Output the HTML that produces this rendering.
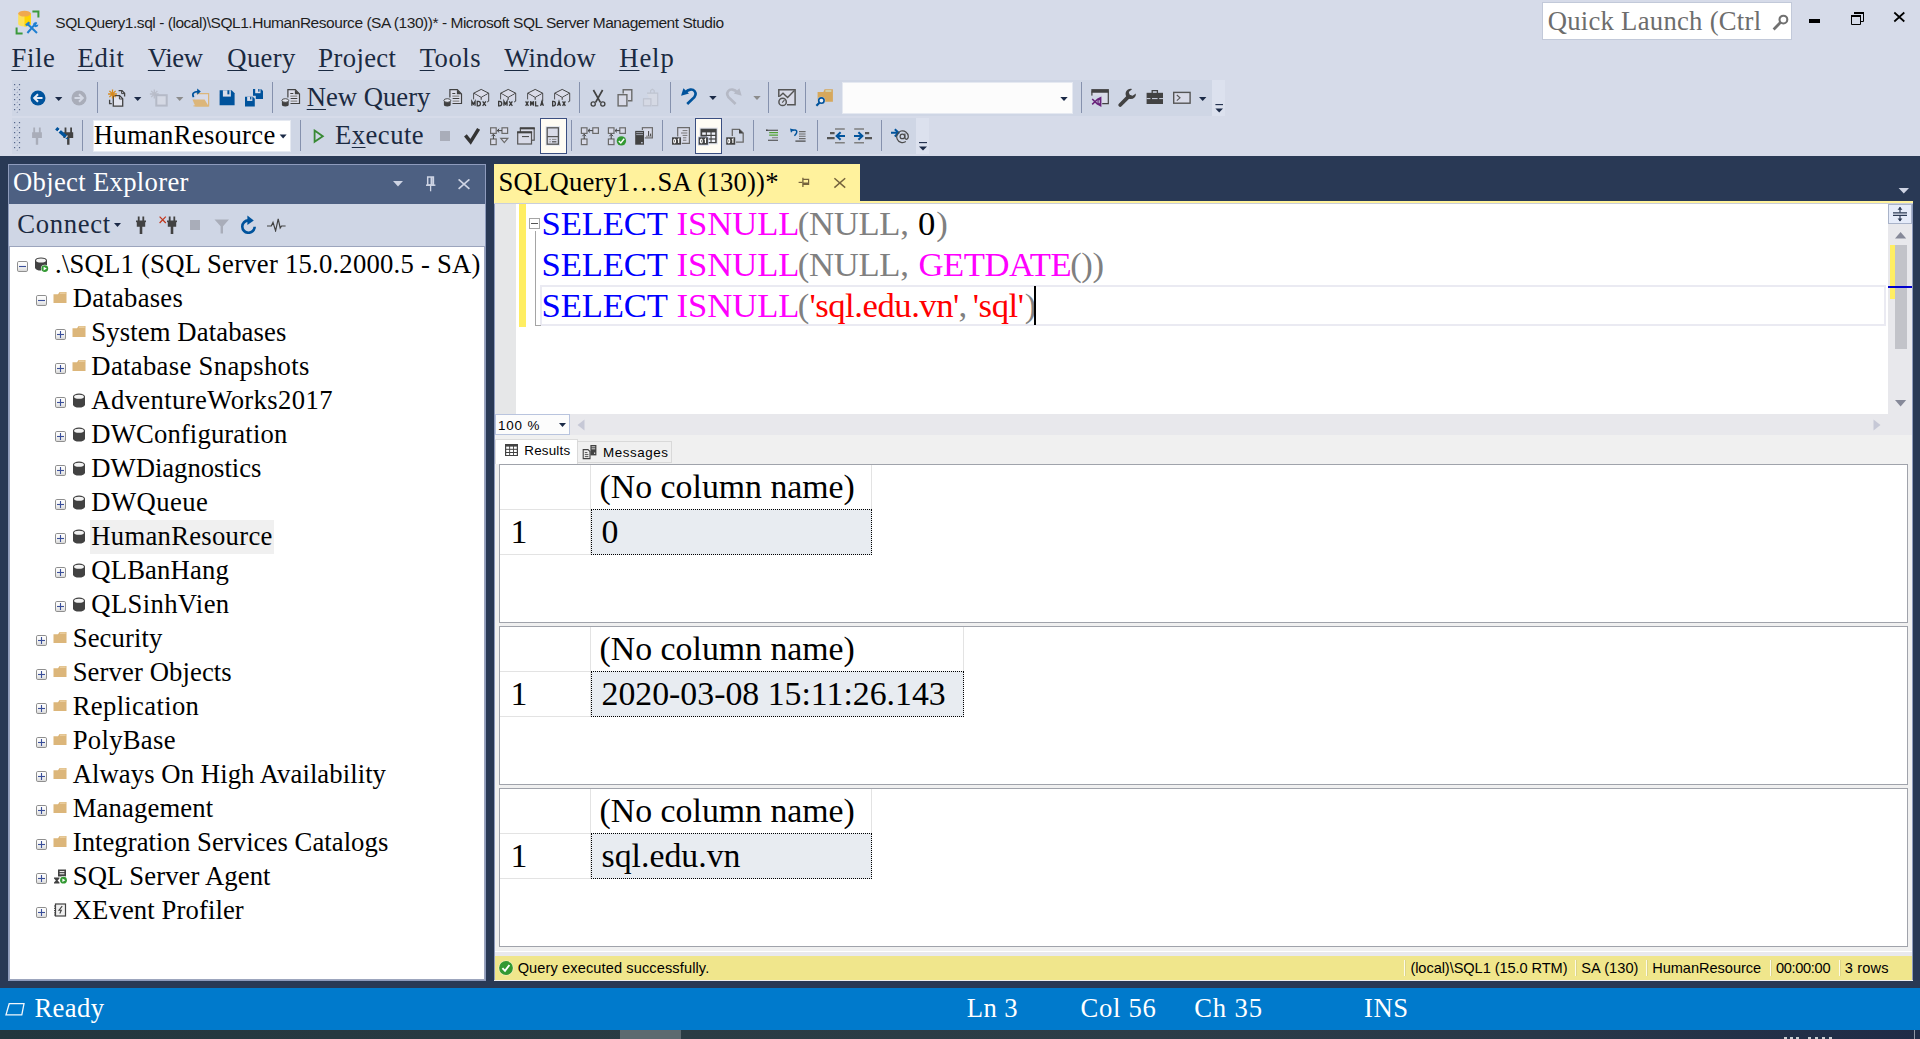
<!DOCTYPE html>
<html>
<head>
<meta charset="utf-8">
<title>SQLQuery1.sql - Microsoft SQL Server Management Studio</title>
<style>
*{box-sizing:border-box;margin:0;padding:0}
html,body{width:1920px;height:1039px;overflow:hidden}
body{background:#d6dbe9;font-family:"Liberation Serif",serif;color:#000;position:relative}
.a{position:absolute;display:block}
.sans{font-family:"Liberation Sans",sans-serif}
.t{position:absolute;white-space:nowrap;line-height:1}
u{text-decoration:underline;text-decoration-thickness:1px;text-underline-offset:3px;text-decoration-skip-ink:none}
.kw{color:#0000ff}.fn{color:#ff00ff}.gr{color:#808080}.st{color:#ff0000}
</style>
</head>
<body>
<svg class="a" style="left:15px;top:9px" width="26" height="26" viewBox="0 0 26 26"><path d="M3.2 4.6V15A6.3 2.6 0 0 0 15.8 15V4.6Z" fill="#fde05a"/><path d="M9.5 4.6V17.6A6.3 2.6 0 0 0 15.8 15V4.6Z" fill="#ffd400"/><ellipse cx="9.5" cy="4.6" rx="6.3" ry="2.9" fill="#f0a94e"/><path d="M17.4 2.6H23.4V8.6" fill="none" stroke="#3c9a3c" stroke-width="2"/><path d="M1.6 18.4V24.4H7.6" fill="none" stroke="#3c9a3c" stroke-width="2"/><path d="M12 14.6L22 24M21.6 13.4L12.4 24" fill="none" stroke="#1f7fd1" stroke-width="2"/><path d="M10.2 15.6L13.6 12.4L15.2 14L11.8 17.2Z" fill="#1f7fd1"/><path d="M19.6 13.2A2.6 2.6 0 1 0 23.4 15.4L21.6 16L20.4 14.8Z" fill="#1f7fd1"/></svg>
<div class="t sans" style="left:55.3px;top:15.18px;font-size:15.5px;color:#1e1e1e;letter-spacing:-0.458px;">SQLQuery1.sql - (local)\SQL1.HumanResource (SA (130))* - Microsoft SQL Server Management Studio</div>
<div class="a" style="left:1542px;top:2px;width:250px;height:38px;background:#ffffff;border:1px solid #c2c9d9;"></div>
<div class="t" style="left:1547.63px;top:7.96px;font-size:26.67px;color:#6d6d6d;letter-spacing:0.279px;">Quick Launch (Ctrl</div>
<svg class="a" style="left:1772px;top:14px" width="17" height="17" viewBox="0 0 17 17"><circle cx="11.4" cy="5.6" r="3.9" fill="none" stroke="#717171" stroke-width="2.1"/><path d="M8.4 8.6L1.6 15.4" stroke="#717171" stroke-width="2.8"/></svg>
<div class="a" style="left:1809px;top:19px;width:11px;height:4px;background:#000;"></div>
<svg class="a" style="left:1851px;top:12px" width="13" height="13" viewBox="0 0 13 13"><path d="M3.5 0.5H12.5V9.5H9.5M0.5 3.5H9.5V12.5H0.5Z" fill="none" stroke="#000" stroke-width="1"/><path d="M3 1H13M0 4H10" stroke="#000" stroke-width="2"/></svg>
<svg class="a" style="left:1893px;top:11px" width="13" height="12" viewBox="0 0 13 12"><path d="M1.3 1.5L11.3 10.5M11.3 1.5L1.3 10.5" stroke="#000" stroke-width="1.7" fill="none"/></svg>
<div class="t" style="left:11.4px;top:44.96px;font-size:26.67px;color:#1b2a41;letter-spacing:0.687px;"><u>F</u>ile</div>
<div class="t" style="left:77.6px;top:44.96px;font-size:26.67px;color:#1b2a41;letter-spacing:0.643px;"><u>E</u>dit</div>
<div class="t" style="left:147.83px;top:44.96px;font-size:26.67px;color:#1b2a41;letter-spacing:-0.325px;"><u>V</u>iew</div>
<div class="t" style="left:227.33px;top:44.96px;font-size:26.67px;color:#1b2a41;letter-spacing:0.331px;"><u>Q</u>uery</div>
<div class="t" style="left:318.3px;top:44.96px;font-size:26.67px;color:#1b2a41;letter-spacing:0.36px;"><u>P</u>roject</div>
<div class="t" style="left:419.67px;top:44.96px;font-size:26.67px;color:#1b2a41;letter-spacing:0.532px;"><u>T</u>ools</div>
<div class="t" style="left:504.3px;top:44.96px;font-size:26.67px;color:#1b2a41;letter-spacing:0.124px;"><u>W</u>indow</div>
<div class="t" style="left:619.3px;top:44.96px;font-size:26.67px;color:#1b2a41;letter-spacing:0.865px;"><u>H</u>elp</div>
<div class="a" style="left:12px;top:80px;width:1200px;height:36px;background:#cfd6e5;"></div>
<div class="a" style="left:12px;top:118px;width:904px;height:36px;background:#cfd6e5;"></div>
<svg class="a" style="left:14px;top:84px" width="7" height="30" viewBox="0 0 7 30"><rect x="0" y="0" width="1.2" height="1.2" fill="#56668a"/><rect x="4.9" y="0" width="1.2" height="1.2" fill="#56668a"/><rect x="2.1" y="2.1" width="1.2" height="1.2" fill="#e3e7f1"/><rect x="2.6" y="2.6" width="1.2" height="1.2" fill="#939fba"/><rect x="0" y="5" width="1.2" height="1.2" fill="#56668a"/><rect x="4.9" y="5" width="1.2" height="1.2" fill="#56668a"/><rect x="2.1" y="7.1" width="1.2" height="1.2" fill="#e3e7f1"/><rect x="2.6" y="7.6" width="1.2" height="1.2" fill="#939fba"/><rect x="0" y="10" width="1.2" height="1.2" fill="#56668a"/><rect x="4.9" y="10" width="1.2" height="1.2" fill="#56668a"/><rect x="2.1" y="12.1" width="1.2" height="1.2" fill="#e3e7f1"/><rect x="2.6" y="12.6" width="1.2" height="1.2" fill="#939fba"/><rect x="0" y="15" width="1.2" height="1.2" fill="#56668a"/><rect x="4.9" y="15" width="1.2" height="1.2" fill="#56668a"/><rect x="2.1" y="17.1" width="1.2" height="1.2" fill="#e3e7f1"/><rect x="2.6" y="17.6" width="1.2" height="1.2" fill="#939fba"/><rect x="0" y="20" width="1.2" height="1.2" fill="#56668a"/><rect x="4.9" y="20" width="1.2" height="1.2" fill="#56668a"/><rect x="2.1" y="22.1" width="1.2" height="1.2" fill="#e3e7f1"/><rect x="2.6" y="22.6" width="1.2" height="1.2" fill="#939fba"/><rect x="0" y="25" width="1.2" height="1.2" fill="#56668a"/><rect x="4.9" y="25" width="1.2" height="1.2" fill="#56668a"/><rect x="2.1" y="27.1" width="1.2" height="1.2" fill="#e3e7f1"/><rect x="2.6" y="27.6" width="1.2" height="1.2" fill="#939fba"/></svg>
<svg class="a" style="left:14px;top:122px" width="7" height="30" viewBox="0 0 7 30"><rect x="0" y="0" width="1.2" height="1.2" fill="#56668a"/><rect x="4.9" y="0" width="1.2" height="1.2" fill="#56668a"/><rect x="2.1" y="2.1" width="1.2" height="1.2" fill="#e3e7f1"/><rect x="2.6" y="2.6" width="1.2" height="1.2" fill="#939fba"/><rect x="0" y="5" width="1.2" height="1.2" fill="#56668a"/><rect x="4.9" y="5" width="1.2" height="1.2" fill="#56668a"/><rect x="2.1" y="7.1" width="1.2" height="1.2" fill="#e3e7f1"/><rect x="2.6" y="7.6" width="1.2" height="1.2" fill="#939fba"/><rect x="0" y="10" width="1.2" height="1.2" fill="#56668a"/><rect x="4.9" y="10" width="1.2" height="1.2" fill="#56668a"/><rect x="2.1" y="12.1" width="1.2" height="1.2" fill="#e3e7f1"/><rect x="2.6" y="12.6" width="1.2" height="1.2" fill="#939fba"/><rect x="0" y="15" width="1.2" height="1.2" fill="#56668a"/><rect x="4.9" y="15" width="1.2" height="1.2" fill="#56668a"/><rect x="2.1" y="17.1" width="1.2" height="1.2" fill="#e3e7f1"/><rect x="2.6" y="17.6" width="1.2" height="1.2" fill="#939fba"/><rect x="0" y="20" width="1.2" height="1.2" fill="#56668a"/><rect x="4.9" y="20" width="1.2" height="1.2" fill="#56668a"/><rect x="2.1" y="22.1" width="1.2" height="1.2" fill="#e3e7f1"/><rect x="2.6" y="22.6" width="1.2" height="1.2" fill="#939fba"/><rect x="0" y="25" width="1.2" height="1.2" fill="#56668a"/><rect x="4.9" y="25" width="1.2" height="1.2" fill="#56668a"/><rect x="2.1" y="27.1" width="1.2" height="1.2" fill="#e3e7f1"/><rect x="2.6" y="27.6" width="1.2" height="1.2" fill="#939fba"/></svg>
<div class="t" style="left:306.7px;top:83.96px;font-size:26.67px;color:#1b2a41;letter-spacing:0.015px;"><u>N</u>ew Query</div>
<div class="t" style="left:335.0px;top:121.96px;font-size:26.67px;color:#1b2a41;letter-spacing:0.459px;">E<u>x</u>ecute</div>
<div class="a" style="left:842px;top:82px;width:231px;height:32px;background:#fcfcfc;border:1px solid #e5e9f1;"></div>
<div class="a" style="left:93px;top:120px;width:198px;height:32px;background:#ffffff;border:1px solid #e5e9f1;"></div>
<div class="t" style="left:93.7px;top:121.96px;font-size:26.67px;color:#000;letter-spacing:0.323px;">HumanResource</div>
<div class="a" style="left:97px;top:82px;width:1px;height:31px;background:#8591ad;"></div>
<div class="a" style="left:272px;top:82px;width:1px;height:31px;background:#8591ad;"></div>
<div class="a" style="left:579px;top:82px;width:1px;height:31px;background:#8591ad;"></div>
<div class="a" style="left:670px;top:82px;width:1px;height:31px;background:#8591ad;"></div>
<div class="a" style="left:768px;top:82px;width:1px;height:31px;background:#8591ad;"></div>
<div class="a" style="left:805px;top:82px;width:1px;height:31px;background:#8591ad;"></div>
<div class="a" style="left:1081px;top:82px;width:1px;height:31px;background:#8591ad;"></div>
<div class="a" style="left:82px;top:120px;width:1px;height:31px;background:#8591ad;"></div>
<div class="a" style="left:300px;top:120px;width:1px;height:31px;background:#8591ad;"></div>
<div class="a" style="left:571px;top:120px;width:1px;height:31px;background:#8591ad;"></div>
<div class="a" style="left:662px;top:120px;width:1px;height:31px;background:#8591ad;"></div>
<div class="a" style="left:753px;top:120px;width:1px;height:31px;background:#8591ad;"></div>
<div class="a" style="left:817px;top:120px;width:1px;height:31px;background:#8591ad;"></div>
<div class="a" style="left:881px;top:120px;width:1px;height:31px;background:#8591ad;"></div>
<svg class="a" style="left:0px;top:80px;opacity:0.999" width="1300" height="76" viewBox="0 80 1300 76"><circle cx="38" cy="98" r="7.5" fill="#00539c"/><path d="M42.5 98H34.6M38 94.3L34.2 98L38 101.7" fill="none" stroke="#e8ecf5" stroke-width="2"/><path d="M55 97H62.4L58.7 101Z" fill="#1b2a47"/><circle cx="79" cy="98" r="7.5" fill="#a9adb9"/><path d="M74.5 98H82.4M79 94.3L82.8 98L79 101.7" fill="none" stroke="#d3d8e4" stroke-width="2"/><path d="M118.6 90.6H122L124.6 93.2V96.6" fill="none" stroke="#424242" stroke-width="1.3"/><path d="M121.6 90.6V93.6H124.6" fill="none" stroke="#424242" stroke-width="1"/><path d="M113.3 95.6H119.6L122.7 98.7V106.2H113.3Z" fill="#e2e4ee" stroke="#424242" stroke-width="1.3"/><path d="M119.4 95.6V99H122.7" fill="none" stroke="#424242" stroke-width="1"/><path d="M109.6 99.8V103.6H111.8" fill="none" stroke="#424242" stroke-width="1.3"/><path d="M112.5 89.6V98.4M108.1 94H116.9M109.4 90.9L115.6 97.1M115.6 90.9L109.4 97.1" stroke="#d68a1e" stroke-width="1.3" fill="none"/><path d="M134 97H141.4L137.7 101Z" fill="#1b2a47"/><path d="M154.3 89.6V98.4M149.9 94H158.70000000000002M151.20000000000002 90.9L157.4 97.1M157.4 90.9L151.20000000000002 97.1" stroke="#b9bdc9" stroke-width="1.3" fill="none"/><rect x="156.3" y="95.2" width="10.4" height="10.4" fill="#d5d9e4" stroke="#b5bac7" stroke-width="2"/><path d="M176 97H183.4L179.7 101Z" fill="#8c8c8c"/><path d="M196.5 93.6H208.6V105.8H193.5" fill="#d8dbe8" stroke="#dcb67a" stroke-width="1.2"/><path d="M192.4 99.4H204.6L208.8 106.4H195.4Z" fill="#dcb67a"/><path d="M193.6 97.2C191.6 93.6 193.6 91.4 198.6 91.6" fill="none" stroke="#00539c" stroke-width="1.7"/><path d="M197.2 88.6L200.8 91.6L197.2 94.8Z" fill="#00539c"/><path d="M219.6 90.3H231.6L234.6 93.3V105.3H219.6Z" fill="#00539c"/><rect x="222.9" y="90.3" width="7.95" height="6.3" fill="#d9dde9"/><rect x="227.4" y="90.3" width="1.9500000000000002" height="4.050000000000001" fill="#00539c"/><path d="M253 89H261.0L263 91.0V99H253Z" fill="#00539c"/><rect x="255.2" y="89" width="5.300000000000001" height="4.2" fill="#d9dde9"/><rect x="258.2" y="89" width="1.3" height="2.7" fill="#00539c"/><rect x="244" y="95.8" width="11.8" height="12" fill="#cfd6e5"/><path d="M245 96.8H252.84L254.8 98.75999999999999V106.6H245Z" fill="#00539c"/><rect x="247.156" y="96.8" width="5.194000000000001" height="4.1160000000000005" fill="#d9dde9"/><rect x="250.096" y="96.8" width="1.2740000000000002" height="2.6460000000000004" fill="#00539c"/><path d="M287.90000000000003 89.69999999999999H295.3L299.5 93.89999999999999V103.5H287.90000000000003Z" fill="#dcdeeb" stroke="#424242" stroke-width="1.2"/><path d="M294.90000000000003 89.5L299.7 94.3H294.90000000000003Z" fill="#424242"/><path d="M290.3 93.5H293.3M290.3 98.5H297.3" stroke="#424242" stroke-width="1.1"/><path d="M290.3 96.1H297.3M290.3 101.1H297.3" stroke="#8c8c8c" stroke-width="1.1"/><rect x="280.7" y="97.5" width="9.8" height="9.6" fill="#cfd6e5"/><path d="M281.90000000000003 100.5V104.69999999999999A3.4 1.7 0 0 0 288.7 104.69999999999999V100.5Z" fill="#424242"/><ellipse cx="285.3" cy="100.5" rx="3.4" ry="1.8" fill="#e4e6ef" stroke="#424242" stroke-width="0.9"/><path d="M449.90000000000003 89.69999999999999H457.3L461.5 93.89999999999999V103.5H449.90000000000003Z" fill="#dcdeeb" stroke="#424242" stroke-width="1.2"/><path d="M456.90000000000003 89.5L461.7 94.3H456.90000000000003Z" fill="#424242"/><path d="M452.3 93.5H455.3M452.3 98.5H459.3" stroke="#424242" stroke-width="1.1"/><path d="M452.3 96.1H459.3M452.3 101.1H459.3" stroke="#8c8c8c" stroke-width="1.1"/><rect x="442.7" y="97.5" width="9.8" height="9.6" fill="#cfd6e5"/><path d="M443.90000000000003 100.5V104.69999999999999A3.4 1.7 0 0 0 450.7 104.69999999999999V100.5Z" fill="#424242"/><ellipse cx="447.3" cy="100.5" rx="3.4" ry="1.8" fill="#e4e6ef" stroke="#424242" stroke-width="0.9"/><path d="M481.2 89.4L488.7 93.2L481.2 97.4L473.7 93.2Z" fill="#dadbe8" stroke="#424242" stroke-width="1"/><path d="M473.7 93.2V99.4M481.2 97.4V99.6M488.7 93.2V101.2L487.09999999999997 102" fill="none" stroke="#424242" stroke-width="1"/><path d="M474.3 94L481.2 98L488.09999999999997 94V99.5H474.3Z" fill="#dadbe8" opacity="0.8"/><path d="M481.2 97.4V99.6" stroke="#424242" stroke-width="1"/><path d="M471.84999999999997 105.85000000000001V101.35000000000001L473.45 104.14L475.04999999999995 101.35000000000001V105.85000000000001" fill="none" stroke="#3a3a3a" stroke-width="1.3" stroke-linejoin="miter"/><path d="M477.24999999999994 101.35000000000001V105.85000000000001H478.36999999999995Q480.44999999999993 105.85000000000001 480.44999999999993 103.60000000000001Q480.44999999999993 101.35000000000001 478.36999999999995 101.35000000000001Z" fill="none" stroke="#3a3a3a" stroke-width="1.3" stroke-linejoin="miter"/><path d="M482.65 101.35000000000001L485.84999999999997 105.85000000000001M485.84999999999997 101.35000000000001L482.65 105.85000000000001" fill="none" stroke="#3a3a3a" stroke-width="1.3" stroke-linejoin="miter"/><path d="M508.2 89.4L515.7 93.2L508.2 97.4L500.7 93.2Z" fill="#dadbe8" stroke="#424242" stroke-width="1"/><path d="M500.7 93.2V99.4M508.2 97.4V99.6M515.7 93.2V101.2L514.1 102" fill="none" stroke="#424242" stroke-width="1"/><path d="M501.3 94L508.2 98L515.1 94V99.5H501.3Z" fill="#dadbe8" opacity="0.8"/><path d="M508.2 97.4V99.6" stroke="#424242" stroke-width="1"/><path d="M498.65 101.35000000000001V105.85000000000001H499.73499999999996Q501.75 105.85000000000001 501.75 103.60000000000001Q501.75 101.35000000000001 499.73499999999996 101.35000000000001Z" fill="none" stroke="#3a3a3a" stroke-width="1.3" stroke-linejoin="miter"/><path d="M503.95 105.85000000000001V101.35000000000001L505.5 104.14L507.05 101.35000000000001V105.85000000000001" fill="none" stroke="#3a3a3a" stroke-width="1.3" stroke-linejoin="miter"/><path d="M509.25 101.35000000000001L512.35 105.85000000000001M512.35 101.35000000000001L509.25 105.85000000000001" fill="none" stroke="#3a3a3a" stroke-width="1.3" stroke-linejoin="miter"/><path d="M535.2 89.4L542.7 93.2L535.2 97.4L527.7 93.2Z" fill="#dadbe8" stroke="#424242" stroke-width="1"/><path d="M527.7 93.2V99.4M535.2 97.4V99.6M542.7 93.2V101.2L541.1 102" fill="none" stroke="#424242" stroke-width="1"/><path d="M528.3000000000001 94L535.2 98L542.1 94V99.5H528.3000000000001Z" fill="#dadbe8" opacity="0.8"/><path d="M535.2 97.4V99.6" stroke="#424242" stroke-width="1"/><path d="M525.65 101.35000000000001L528.425 105.85000000000001M528.425 101.35000000000001L525.65 105.85000000000001" fill="none" stroke="#3a3a3a" stroke-width="1.3" stroke-linejoin="miter"/><path d="M530.625 105.85000000000001V101.35000000000001L532.0125 104.14L533.4 101.35000000000001V105.85000000000001" fill="none" stroke="#3a3a3a" stroke-width="1.3" stroke-linejoin="miter"/><path d="M535.6 101.35000000000001V105.85000000000001H538.375" fill="none" stroke="#3a3a3a" stroke-width="1.3" stroke-linejoin="miter"/><path d="M540.5749999999999 105.85000000000001L541.9625 101.35000000000001L543.3499999999999 105.85000000000001M541.1854999999999 104.32000000000001H542.7394999999999" fill="none" stroke="#3a3a3a" stroke-width="1.3" stroke-linejoin="miter"/><path d="M562.2 89.4L569.7 93.2L562.2 97.4L554.7 93.2Z" fill="#dadbe8" stroke="#424242" stroke-width="1"/><path d="M554.7 93.2V99.4M562.2 97.4V99.6M569.7 93.2V101.2L568.1 102" fill="none" stroke="#424242" stroke-width="1"/><path d="M555.3000000000001 94L562.2 98L569.1 94V99.5H555.3000000000001Z" fill="#dadbe8" opacity="0.8"/><path d="M562.2 97.4V99.6" stroke="#424242" stroke-width="1"/><path d="M552.65 101.35000000000001V105.85000000000001H553.6183333333333Q555.4166666666666 105.85000000000001 555.4166666666666 103.60000000000001Q555.4166666666666 101.35000000000001 553.6183333333333 101.35000000000001Z" fill="none" stroke="#3a3a3a" stroke-width="1.3" stroke-linejoin="miter"/><path d="M557.6166666666667 105.85000000000001L559.0 101.35000000000001L560.3833333333333 105.85000000000001M558.2253333333333 104.32000000000001H559.7746666666667" fill="none" stroke="#3a3a3a" stroke-width="1.3" stroke-linejoin="miter"/><path d="M562.5833333333333 101.35000000000001L565.3499999999999 105.85000000000001M565.3499999999999 101.35000000000001L562.5833333333333 105.85000000000001" fill="none" stroke="#3a3a3a" stroke-width="1.3" stroke-linejoin="miter"/><path d="M593.4 90L600.4 102.4M602.6 90L595.6 102.4" stroke="#424242" stroke-width="1.7" fill="none"/><circle cx="593.2" cy="104" r="2.1" fill="none" stroke="#424242" stroke-width="1.3"/><circle cx="602.8" cy="104" r="2.1" fill="none" stroke="#424242" stroke-width="1.3"/><path d="M623.2 93.6V89.8H631.8V100.7H628" fill="#d9dbe8" stroke="#6b6b6b" stroke-width="1.4"/><rect x="618.1" y="94.7" width="8.8" height="11.2" fill="#d9dbe8" stroke="#6b6b6b" stroke-width="1.4"/><path d="M647 93.2H657.7V105.7H652" fill="#d5d9e4" stroke="#bfc4d0" stroke-width="1.2"/><path d="M650.6 93V90.6L652.4 89.2L654.2 90.6V93" fill="none" stroke="#bfc4d0" stroke-width="1.1"/><rect x="643.5" y="98.8" width="7.4" height="7" fill="#d5d9e4" stroke="#bfc4d0" stroke-width="1.2"/><path d="M685.6 92.4C688 89.2 692.6 88.6 694.7 91.2C696.6 93.8 695 96.8 692.4 99L687.2 104" fill="none" stroke="#00539c" stroke-width="2.6"/><path d="M683.4 88.3L681.1 95.8L689 93.6Z" fill="#00539c"/><path d="M709.2 96H716.6L712.9000000000001 100Z" fill="#1b2a47"/><path d="M737.2 92.4C734.8 89.2 730.2 88.6 728.1 91.2C726.2 93.8 727.8 96.8 730.4 99L735.6 104" fill="none" stroke="#b5b9c5" stroke-width="2.6"/><path d="M739.4 88.3L741.7 95.8L733.8 93.6Z" fill="#b5b9c5"/><path d="M753.3 96H760.6999999999999L757.0 100Z" fill="#8c8c8c"/><path d="M787 104.8H795.1V89.8H778.8V97" fill="#d9dbe8" stroke="#555" stroke-width="1.5"/><path d="M779.4 96.4L783 93.2L787.6 97.6L794.4 90.4" fill="none" stroke="#555" stroke-width="1.4"/><circle cx="782.6" cy="101.9" r="3.7" fill="#d5d9e6" stroke="#555" stroke-width="1.5"/><path d="M782.2 102.6L784.4 100.2" stroke="#555" stroke-width="1.1"/><path d="M817.6 92H823.4L824.6 89.2H832.9V101.8H817.6Z" fill="#d6a85c"/><rect x="825.4" y="90.4" width="6" height="1.2" fill="#cfe6d8"/><circle cx="821.4" cy="100.6" r="3.9" fill="#cfd6e5"/><circle cx="821.4" cy="100.6" r="2.7" fill="#e9ecf4" stroke="#00539c" stroke-width="1.6"/><path d="M819.4 102.8L816.4 105.8" stroke="#00539c" stroke-width="2.2"/><path d="M1102 103.6H1108.3V92H1091.9V96" fill="#d9dbe8" stroke="#424242" stroke-width="1.2"/><rect x="1091.3" y="89.1" width="17.6" height="3.4" fill="#424242"/><rect x="1090.6" y="95.6" width="11.6" height="12" fill="#cfd6e5"/><path d="M1092.2 99L1097.8 104.4M1092.2 104.4L1097.8 99" fill="none" stroke="#68217a" stroke-width="1.5"/><path d="M1097.4 98.6L1101.4 96.4V107L1097.4 104.8Z" fill="#68217a"/><path d="M1099.2 100.2V103.2" stroke="#cfd6e5" stroke-width="1"/><path d="M1120.2 105L1128.8 96.4" stroke="#424242" stroke-width="3.8" stroke-linecap="round"/><path d="M1132.2 88.9A5.2 5.2 0 1 0 1135.9 93.4L1132.6 95.8L1129.6 94.8L1128.8 92Z" fill="#424242"/><path d="M1152.2 93.2V90.6H1157.4V93.2" fill="none" stroke="#424242" stroke-width="1.3"/><rect x="1146.6" y="92.8" width="16.4" height="11.2" fill="#424242"/><path d="M1146.6 98.6H1163" stroke="#cfd6e5" stroke-width="1"/><rect x="1150.4" y="97.4" width="1.6" height="2.6" fill="#424242"/><rect x="1157.6" y="97.4" width="1.6" height="2.6" fill="#424242"/><rect x="1173.7" y="92.4" width="16.4" height="10.8" fill="#d9dbe8" stroke="#555" stroke-width="1.4"/><path d="M1176.8 95L1180 97.8L1176.8 100.6" fill="none" stroke="#555" stroke-width="1.1"/><path d="M1199 97H1206.4L1202.7 101Z" fill="#1b2a47"/><path d="M1060.3 97H1067.7L1064.0 101Z" fill="#1b2a47"/><rect x="1212" y="80" width="13" height="36" fill="#dce1ee"/><path d="M1215.4 104.6H1223" stroke="#1b2a47" stroke-width="1.1"/><path d="M1215.4 108.4H1223.0L1219.2 112.4Z" fill="#1b2a47"/><path d="M33.300000000000004 127.4H35.1V132.20000000000002H38.9V127.4H40.7V132.20000000000002H41.900000000000006V138.0H38.2V144.8H35.800000000000004V138.0H32.1 V132.20000000000002H33.300000000000004Z" fill="#a9adb9"/><path d="M64.6 127.4H66.4V132.20000000000002H70.2V127.4H72.0V132.20000000000002H73.2V138.0H69.5V144.8H67.1V138.0H63.4 V132.20000000000002H64.6Z" fill="#424242"/><path d="M56.2 128.2L58.6 130.2" stroke="#00539c" stroke-width="3.4"/><path d="M59.6 131.2L66 136.8" stroke="#00539c" stroke-width="3.4"/><path d="M66.6 137.4L68 138.8L65.6 138.4Z" fill="#00539c" stroke="#00539c" stroke-width="0.8"/><path d="M58.6 130.2L59.6 131.2M66 136.8L66.8 137.4" stroke="#dfe4f0" stroke-width="3.6"/><path d="M279.6 134.6H286.6L283.1 138.4Z" fill="#1b2a47"/><path d="M314.6 130.6L322.8 136.2L314.6 141.8Z" fill="none" stroke="#388a34" stroke-width="1.8" stroke-linejoin="miter"/><rect x="440" y="131" width="10" height="10" fill="#a9adb9"/><path d="M465.4 135.4L470.6 141.8L478.6 128.8" fill="none" stroke="#333" stroke-width="3.5"/><rect x="490.6" y="127.8" width="5.6" height="5.6" fill="#d9dbe8" stroke="#6b6b6b" stroke-width="1.2"/><rect x="502" y="127.8" width="5.6" height="5.6" fill="#d9dbe8" stroke="#6b6b6b" stroke-width="1.2"/><rect x="490.6" y="139" width="5.6" height="5.6" fill="#d9dbe8" stroke="#6b6b6b" stroke-width="1.2"/><path d="M502 130.6H497.4M499.2 128.8L497.2 130.6L499.2 132.4" fill="none" stroke="#424242" stroke-width="1"/><path d="M493.4 139V134.6M491.6 136.2L493.4 134.2L495.2 136.2" fill="none" stroke="#424242" stroke-width="1"/><path d="M500.8 138.4H507.8L504.3 142.6Z" fill="#d9dbe8" stroke="#6b6b6b" stroke-width="1.2"/><rect x="581.4" y="127.8" width="5.6" height="5.6" fill="#d9dbe8" stroke="#6b6b6b" stroke-width="1.2"/><rect x="592.8" y="127.8" width="5.6" height="5.6" fill="#d9dbe8" stroke="#6b6b6b" stroke-width="1.2"/><rect x="581.4" y="139" width="5.6" height="5.6" fill="#d9dbe8" stroke="#6b6b6b" stroke-width="1.2"/><path d="M592.8 130.6H588.1999999999999M590.0 128.8L588.0 130.6L590.0 132.4" fill="none" stroke="#424242" stroke-width="1"/><path d="M584.1999999999999 139V134.6M582.4 136.2L584.1999999999999 134.2L586.0 136.2" fill="none" stroke="#424242" stroke-width="1"/><rect x="608.4" y="127.8" width="5.6" height="5.6" fill="#d9dbe8" stroke="#6b6b6b" stroke-width="1.2"/><rect x="619.8" y="127.8" width="5.6" height="5.6" fill="#d9dbe8" stroke="#6b6b6b" stroke-width="1.2"/><rect x="608.4" y="139" width="5.6" height="5.6" fill="#d9dbe8" stroke="#6b6b6b" stroke-width="1.2"/><path d="M619.8 130.6H615.1999999999999M617.0 128.8L615.0 130.6L617.0 132.4" fill="none" stroke="#424242" stroke-width="1"/><path d="M611.1999999999999 139V134.6M609.4 136.2L611.1999999999999 134.2L613.0 136.2" fill="none" stroke="#424242" stroke-width="1"/><circle cx="621.4" cy="140.9" r="5.3" fill="#cfd6e5"/><circle cx="621.4" cy="140.9" r="4.7" fill="#329932"/><path d="M618.8 141L620.8 143L624.2 138.8" fill="none" stroke="#fff" stroke-width="1.4"/><rect x="520.4" y="128.6" width="13.8" height="11.6" fill="#d9dbe8" stroke="#555" stroke-width="1.2"/><path d="M519.8 128.2H534.8" stroke="#424242" stroke-width="2"/><rect x="517.7" y="132.6" width="13.8" height="11.4" fill="#d9dbe8" stroke="#555" stroke-width="1.2"/><path d="M517.1 132.2H532.1" stroke="#424242" stroke-width="2"/><path d="M522 136.6H529" stroke="#424242" stroke-width="1"/><rect x="540.5" y="118.5" width="26" height="35" fill="#fffcf4" stroke="#3b4f81" stroke-width="1"/><rect x="545.6" y="126.2" width="14.4" height="19.4" fill="#c7d0e8" opacity="0.6"/><rect x="547.2" y="127.8" width="11.2" height="16.4" fill="#d9dbe8" stroke="#555" stroke-width="1.3"/><path d="M547.2 136.6H558.4" stroke="#555" stroke-width="1.2"/><path d="M549.4 139.4H550.8M552 139.4H556.4M549.4 141.8H550.8" stroke="#8c8c8c" stroke-width="1"/><path d="M552 141.8H556.4" stroke="#424242" stroke-width="1.1"/><rect x="642.4" y="127.7" width="10" height="10.2" fill="#d9dbe8" stroke="#6b6b6b" stroke-width="1.2"/><path d="M648.6 136V131M650.6 136V133.6" stroke="#424242" stroke-width="1"/><path d="M646 136.2H651.6" stroke="#6b6b6b" stroke-width="0.8"/><rect x="634.4" y="130" width="10.4" height="15.4" fill="#cfd6e5"/><rect x="635.2" y="130.9" width="8.8" height="13.8" fill="#424242"/><path d="M636.2 132.6H643M636.2 134.6H643" stroke="#a9adb9" stroke-width="0.9"/><rect x="641.2" y="142" width="1.4" height="1.4" fill="#cfd6e5"/><path d="M677.7 127.7H689.4V143.4H677.7Z" fill="#d9dbe8" stroke="#6b6b6b" stroke-width="1.2"/><path d="M682.6 130.6H687.4M681 133H687.4M682.6 135.4H687.4M683 137.8H686.4M683 140.2H686.4" stroke="#6b6b6b" stroke-width="0.9"/><rect x="671.2" y="136.5" width="10.6" height="9" fill="#cfd6e5"/><rect x="672" y="137.3" width="9" height="7.4" fill="#424242"/><path d="M674.6 139.075Q675.5250000000001 139.075 675.5250000000001 141.04999999999998Q675.5250000000001 143.02499999999998 674.6 143.02499999999998Q673.6750000000001 143.02499999999998 673.6750000000001 141.04999999999998Q673.6750000000001 139.075 674.6 139.075Z" fill="none" stroke="#fff" stroke-width="1.15" stroke-linejoin="miter"/><path d="M677.8525000000001 140.0625L678.6850000000001 139.075V143.02499999999998" fill="none" stroke="#fff" stroke-width="1.15" stroke-linejoin="miter"/><rect x="695.5" y="118.5" width="26" height="35" fill="#fffcf4" stroke="#3b4f81" stroke-width="1"/><rect x="699.4" y="127.6" width="18.4" height="16.8" fill="#c7d0e8" opacity="0.5"/><rect x="700.5" y="128.7" width="16.2" height="14.5" fill="#424242"/><g fill="#eef0f7"><rect x="702.2" y="132.4" width="3.6" height="2.4"/><rect x="706.9" y="132.4" width="3.6" height="2.4"/><rect x="711.6" y="132.4" width="3.6" height="2.4"/><rect x="706.9" y="136" width="3.6" height="2.4"/><rect x="711.6" y="136" width="3.6" height="2.4"/><rect x="706.9" y="139.6" width="3.6" height="2.4"/><rect x="711.6" y="139.6" width="3.6" height="2.4"/></g><rect x="697.9" y="136.5" width="10.8" height="9" fill="#c7d0e8"/><rect x="698.7" y="137.3" width="9.2" height="7.4" fill="#424242"/><path d="M701.325 139.075Q702.275 139.075 702.275 141.04999999999998Q702.275 143.02499999999998 701.325 143.02499999999998Q700.375 143.02499999999998 700.375 141.04999999999998Q700.375 139.075 701.325 139.075Z" fill="none" stroke="#fff" stroke-width="1.15" stroke-linejoin="miter"/><path d="M704.61 140.0625L705.465 139.075V143.02499999999998" fill="none" stroke="#fff" stroke-width="1.15" stroke-linejoin="miter"/><path d="M732.3 136V129.3H739.4L743.2 133.1V142.2H735" fill="none" stroke="#6b6b6b" stroke-width="1.3"/><path d="M739 129V133.4H743.4Z" fill="#424242"/><rect x="725.4000000000001" y="136.5" width="10.6" height="9" fill="#cfd6e5"/><rect x="726.2" y="137.3" width="9" height="7.4" fill="#424242"/><path d="M728.8000000000001 139.075Q729.7250000000001 139.075 729.7250000000001 141.04999999999998Q729.7250000000001 143.02499999999998 728.8000000000001 143.02499999999998Q727.8750000000001 143.02499999999998 727.8750000000001 141.04999999999998Q727.8750000000001 139.075 728.8000000000001 139.075Z" fill="none" stroke="#fff" stroke-width="1.15" stroke-linejoin="miter"/><path d="M732.0525000000001 140.0625L732.8850000000001 139.075V143.02499999999998" fill="none" stroke="#fff" stroke-width="1.15" stroke-linejoin="miter"/><path d="M766 130.2H778M768 140.3H778" stroke="#424242" stroke-width="1.1"/><path d="M769.2 132.6H778M769.2 135.1H778" stroke="#52a234" stroke-width="1.15"/><path d="M772 137.7H778" stroke="#8c8c8c" stroke-width="1.2"/><rect x="766" y="129.6" width="1.6" height="1.2" fill="#424242"/><path d="M799 131.6H805.6M799 133.9H805.6M799 136.2H805.6M799 138.6H805.6" stroke="#6b6b6b" stroke-width="1.05"/><path d="M795.4 141.1H805.6" stroke="#424242" stroke-width="1.2"/><path d="M792.6 130.4C796.6 128.6 798.6 131.8 794.4 135.8" fill="none" stroke="#00539c" stroke-width="1.5"/><path d="M790 128.6L794 129.4L791 132.8Z" fill="#00539c"/><path d="M835 129H844.8M835 142.8H844.8" stroke="#7f7f7f" stroke-width="1.5"/><path d="M830 133.2H834.6M827 138.2H834.6" stroke="#555" stroke-width="2.2"/><path d="M845 136H837.4M840.6 132.2L836.6 136L840.6 139.8" fill="none" stroke="#00539c" stroke-width="2"/><path d="M854.2 129H864M854.2 142.8H864" stroke="#7f7f7f" stroke-width="1.5"/><path d="M865 133.2H869.2M865 138.2H872" stroke="#555" stroke-width="2.2"/><path d="M854 136H861.6M858.4 132.2L862.4 136L858.4 139.8" fill="none" stroke="#00539c" stroke-width="2"/><path d="M891 132.8H897.6M894.8 129.2L898.6 132.8L894.8 136.4" fill="none" stroke="#00539c" stroke-width="2"/><circle cx="902.4" cy="136.4" r="2.3" fill="none" stroke="#4a4a4a" stroke-width="1.2"/><path d="M904.9 133.6V137.6Q904.9 139.3 906.4 139.3Q908.3 139 908.3 136.2A5.8 5.9 0 1 0 905.8 141.6" fill="none" stroke="#4a4a4a" stroke-width="1.2"/><rect x="916" y="118" width="13" height="36" fill="#dce1ee"/><path d="M919 142.6H927" stroke="#1b2a47" stroke-width="1.1"/><path d="M919 146.6H927L923.0 150.5Z" fill="#1b2a47"/></svg>
<div class="a" style="left:0px;top:156px;width:1920px;height:832px;background:#293955;"></div>
<div class="a" style="left:8px;top:164px;width:478px;height:817px;background:#cfd6e5;border:1px solid #8e9bbc;"></div>
<div class="a" style="left:9px;top:165px;width:476px;height:39px;background:#4d6082;"></div>
<div class="t" style="left:12.93px;top:168.96px;font-size:26.67px;color:#ffffff;letter-spacing:0.325px;">Object Explorer</div>
<svg class="a" style="left:393px;top:181px" width="10" height="6" viewBox="0 0 10 6"><path d="M0 0H10L5 5.4Z" fill="#ced4e4"/></svg>
<svg class="a" style="left:426px;top:176px" width="10" height="16" viewBox="0 0 10 16"><path d="M1.7 1H7.4V9H1.7Z" fill="none" stroke="#ced4e4" stroke-width="1.5"/><path d="M5.6 1V9" stroke="#ced4e4" stroke-width="2.2"/><path d="M0 9.2H9.4" stroke="#ced4e4" stroke-width="1.5"/><path d="M4.6 9.5V15.3" stroke="#ced4e4" stroke-width="1.3"/></svg>
<svg class="a" style="left:458px;top:179px" width="12" height="11" viewBox="0 0 12 11"><path d="M0.6 0.4L11.4 9.8M11.4 0.4L0.6 9.8" stroke="#ced4e4" stroke-width="1.7" fill="none"/></svg>
<div class="t" style="left:17.23px;top:210.96px;font-size:26.67px;color:#1b2a41;letter-spacing:0.665px;">Connect</div>
<svg class="a" style="left:114px;top:223px" width="7" height="4" viewBox="0 0 7 4"><path d="M0 0H7L3.5 4Z" fill="#1b2a47"/></svg>
<svg class="a" style="left:136px;top:216px" width="10" height="18" viewBox="0 0 10 18"><path d="M1.8 0.4H3.6V4.4H6.4V0.4H8.2V4.4H10V5.8L9.2 6.4V10.8H6.3V18H3.7V10.8H0.8V6.4L0 5.8V4.4H1.8Z" fill="#424242"/></svg>
<svg class="a" style="left:159px;top:216px" width="8" height="8" viewBox="0 0 8 8"><path d="M0.6 0.6L6.8 7M6.8 0.6L0.6 7" stroke="#c2361b" stroke-width="1.2" fill="none"/></svg>
<svg class="a" style="left:167px;top:216px" width="10" height="18" viewBox="0 0 10 18"><path d="M1.8 0.4H3.6V4.4H6.4V0.4H8.2V4.4H10V5.8L9.2 6.4V10.8H6.3V18H3.7V10.8H0.8V6.4L0 5.8V4.4H1.8Z" fill="#424242"/></svg>
<div class="a" style="left:190px;top:220px;width:10px;height:10px;background:#a9adb9;"></div>
<svg class="a" style="left:214px;top:219px" width="16" height="15" viewBox="0 0 16 15"><path d="M0.5 0.5H15L9 7.2V14.5H6.6V7.2Z" fill="#a9adb9"/></svg>
<svg class="a" style="left:240px;top:215px" width="18" height="19" viewBox="0 0 18 19"><path d="M8.4 5.4A6.2 6.2 0 1 0 14.7 11.7" fill="none" stroke="#00539c" stroke-width="2.6"/><path d="M7.4 0.6L13.8 5.4L7.4 10Z" fill="#00539c"/></svg>
<svg class="a" style="left:267px;top:218px" width="19" height="14" viewBox="0 0 19 14"><path d="M0 8H4.3L6 4.4L8.6 12.8L11.2 0.8L13.2 10L14.6 8H18.6" fill="none" stroke="#424242" stroke-width="1.2"/></svg>
<div class="a" style="left:9px;top:246px;width:476px;height:734px;background:#ffffff;border:1px solid #9ca5bd;"></div>
<svg class="a" style="left:17px;top:261px" width="11" height="11" viewBox="0 0 11 11"><defs><linearGradient id="eg" x1="0" y1="0" x2="0" y2="1"><stop offset="0" stop-color="#fff"/><stop offset="0.55" stop-color="#f4f4f4"/><stop offset="1" stop-color="#d6d6d6"/></linearGradient></defs><rect x="0.5" y="0.5" width="10" height="10" rx="1.3" fill="url(#eg)" stroke="#8f8f8f"/><path d="M2 5.5H9" stroke="#3b4f9b" stroke-width="1.1"/></svg>
<svg class="a" style="left:34px;top:257px" width="15" height="16" viewBox="0 0 15 16"><path d="M1 3.4V10.6A6 3 0 0 0 13 10.6V3.4Z" fill="#424242"/><ellipse cx="7" cy="3.4" rx="6" ry="3" fill="#424242"/><ellipse cx="7" cy="3.5" rx="4.9" ry="2" fill="#f3f3f3"/><circle cx="10.8" cy="11.6" r="3.9" fill="#fff"/><circle cx="10.8" cy="11.6" r="3.4" fill="#329932"/><path d="M9.6 9.7L12.8 11.6L9.6 13.5Z" fill="#fff"/></svg>
<div class="t" style="left:55.0px;top:250.96px;font-size:26.67px;color:#000;letter-spacing:0.227px;">.\SQL1 (SQL Server 15.0.2000.5 - SA)</div>
<svg class="a" style="left:36px;top:295px" width="11" height="11" viewBox="0 0 11 11"><defs><linearGradient id="eg" x1="0" y1="0" x2="0" y2="1"><stop offset="0" stop-color="#fff"/><stop offset="0.55" stop-color="#f4f4f4"/><stop offset="1" stop-color="#d6d6d6"/></linearGradient></defs><rect x="0.5" y="0.5" width="10" height="10" rx="1.3" fill="url(#eg)" stroke="#8f8f8f"/><path d="M2 5.5H9" stroke="#3b4f9b" stroke-width="1.1"/></svg>
<svg class="a" style="left:52px;top:290px" width="16" height="14" viewBox="0 0 16 14"><path d="M1.5 4.2L6 4.2L7.6 2L14.5 2V13H1.5Z" fill="#dcb67a"/><path d="M8 3.1H13.7" stroke="#f1dcb5" stroke-width="1"/></svg>
<div class="t" style="left:72.7px;top:284.96px;font-size:26.67px;color:#000;letter-spacing:0.261px;">Databases</div>
<svg class="a" style="left:55px;top:329px" width="11" height="11" viewBox="0 0 11 11"><defs><linearGradient id="eg" x1="0" y1="0" x2="0" y2="1"><stop offset="0" stop-color="#fff"/><stop offset="0.55" stop-color="#f4f4f4"/><stop offset="1" stop-color="#d6d6d6"/></linearGradient></defs><rect x="0.5" y="0.5" width="10" height="10" rx="1.3" fill="url(#eg)" stroke="#8f8f8f"/><path d="M2 5.5H9" stroke="#3b4f9b" stroke-width="1.1"/><path d="M5.5 2V9" stroke="#3b4f9b" stroke-width="1.1"/></svg>
<svg class="a" style="left:71px;top:324px" width="16" height="14" viewBox="0 0 16 14"><path d="M1.5 4.2L6 4.2L7.6 2L14.5 2V13H1.5Z" fill="#dcb67a"/><path d="M8 3.1H13.7" stroke="#f1dcb5" stroke-width="1"/></svg>
<div class="t" style="left:91.3px;top:318.96px;font-size:26.67px;color:#000;letter-spacing:0.125px;">System Databases</div>
<svg class="a" style="left:55px;top:363px" width="11" height="11" viewBox="0 0 11 11"><defs><linearGradient id="eg" x1="0" y1="0" x2="0" y2="1"><stop offset="0" stop-color="#fff"/><stop offset="0.55" stop-color="#f4f4f4"/><stop offset="1" stop-color="#d6d6d6"/></linearGradient></defs><rect x="0.5" y="0.5" width="10" height="10" rx="1.3" fill="url(#eg)" stroke="#8f8f8f"/><path d="M2 5.5H9" stroke="#3b4f9b" stroke-width="1.1"/><path d="M5.5 2V9" stroke="#3b4f9b" stroke-width="1.1"/></svg>
<svg class="a" style="left:71px;top:358px" width="16" height="14" viewBox="0 0 16 14"><path d="M1.5 4.2L6 4.2L7.6 2L14.5 2V13H1.5Z" fill="#dcb67a"/><path d="M8 3.1H13.7" stroke="#f1dcb5" stroke-width="1"/></svg>
<div class="t" style="left:91.3px;top:352.96px;font-size:26.67px;color:#000;letter-spacing:0.328px;">Database Snapshots</div>
<svg class="a" style="left:55px;top:397px" width="11" height="11" viewBox="0 0 11 11"><defs><linearGradient id="eg" x1="0" y1="0" x2="0" y2="1"><stop offset="0" stop-color="#fff"/><stop offset="0.55" stop-color="#f4f4f4"/><stop offset="1" stop-color="#d6d6d6"/></linearGradient></defs><rect x="0.5" y="0.5" width="10" height="10" rx="1.3" fill="url(#eg)" stroke="#8f8f8f"/><path d="M2 5.5H9" stroke="#3b4f9b" stroke-width="1.1"/><path d="M5.5 2V9" stroke="#3b4f9b" stroke-width="1.1"/></svg>
<svg class="a" style="left:72px;top:393px" width="14" height="16" viewBox="0 0 14 16"><path d="M1 3.6V11.6A6 3 0 0 0 13 11.6V3.6Z" fill="#424242"/><ellipse cx="7" cy="3.6" rx="6" ry="3" fill="#424242"/><ellipse cx="7" cy="3.7" rx="4.9" ry="2" fill="#f3f3f3"/></svg>
<div class="t" style="left:91.3px;top:386.96px;font-size:26.67px;color:#000;letter-spacing:0.381px;">AdventureWorks2017</div>
<svg class="a" style="left:55px;top:431px" width="11" height="11" viewBox="0 0 11 11"><defs><linearGradient id="eg" x1="0" y1="0" x2="0" y2="1"><stop offset="0" stop-color="#fff"/><stop offset="0.55" stop-color="#f4f4f4"/><stop offset="1" stop-color="#d6d6d6"/></linearGradient></defs><rect x="0.5" y="0.5" width="10" height="10" rx="1.3" fill="url(#eg)" stroke="#8f8f8f"/><path d="M2 5.5H9" stroke="#3b4f9b" stroke-width="1.1"/><path d="M5.5 2V9" stroke="#3b4f9b" stroke-width="1.1"/></svg>
<svg class="a" style="left:72px;top:427px" width="14" height="16" viewBox="0 0 14 16"><path d="M1 3.6V11.6A6 3 0 0 0 13 11.6V3.6Z" fill="#424242"/><ellipse cx="7" cy="3.6" rx="6" ry="3" fill="#424242"/><ellipse cx="7" cy="3.7" rx="4.9" ry="2" fill="#f3f3f3"/></svg>
<div class="t" style="left:91.3px;top:420.96px;font-size:26.67px;color:#000;letter-spacing:0.141px;">DWConfiguration</div>
<svg class="a" style="left:55px;top:465px" width="11" height="11" viewBox="0 0 11 11"><defs><linearGradient id="eg" x1="0" y1="0" x2="0" y2="1"><stop offset="0" stop-color="#fff"/><stop offset="0.55" stop-color="#f4f4f4"/><stop offset="1" stop-color="#d6d6d6"/></linearGradient></defs><rect x="0.5" y="0.5" width="10" height="10" rx="1.3" fill="url(#eg)" stroke="#8f8f8f"/><path d="M2 5.5H9" stroke="#3b4f9b" stroke-width="1.1"/><path d="M5.5 2V9" stroke="#3b4f9b" stroke-width="1.1"/></svg>
<svg class="a" style="left:72px;top:461px" width="14" height="16" viewBox="0 0 14 16"><path d="M1 3.6V11.6A6 3 0 0 0 13 11.6V3.6Z" fill="#424242"/><ellipse cx="7" cy="3.6" rx="6" ry="3" fill="#424242"/><ellipse cx="7" cy="3.7" rx="4.9" ry="2" fill="#f3f3f3"/></svg>
<div class="t" style="left:91.3px;top:454.96px;font-size:26.67px;color:#000;letter-spacing:-0.016px;">DWDiagnostics</div>
<svg class="a" style="left:55px;top:499px" width="11" height="11" viewBox="0 0 11 11"><defs><linearGradient id="eg" x1="0" y1="0" x2="0" y2="1"><stop offset="0" stop-color="#fff"/><stop offset="0.55" stop-color="#f4f4f4"/><stop offset="1" stop-color="#d6d6d6"/></linearGradient></defs><rect x="0.5" y="0.5" width="10" height="10" rx="1.3" fill="url(#eg)" stroke="#8f8f8f"/><path d="M2 5.5H9" stroke="#3b4f9b" stroke-width="1.1"/><path d="M5.5 2V9" stroke="#3b4f9b" stroke-width="1.1"/></svg>
<svg class="a" style="left:72px;top:495px" width="14" height="16" viewBox="0 0 14 16"><path d="M1 3.6V11.6A6 3 0 0 0 13 11.6V3.6Z" fill="#424242"/><ellipse cx="7" cy="3.6" rx="6" ry="3" fill="#424242"/><ellipse cx="7" cy="3.7" rx="4.9" ry="2" fill="#f3f3f3"/></svg>
<div class="t" style="left:91.3px;top:488.96px;font-size:26.67px;color:#000;letter-spacing:0.437px;">DWQueue</div>
<div class="a" style="left:90px;top:520px;width:184px;height:34px;background:#f0f0f0;"></div>
<svg class="a" style="left:55px;top:533px" width="11" height="11" viewBox="0 0 11 11"><defs><linearGradient id="eg" x1="0" y1="0" x2="0" y2="1"><stop offset="0" stop-color="#fff"/><stop offset="0.55" stop-color="#f4f4f4"/><stop offset="1" stop-color="#d6d6d6"/></linearGradient></defs><rect x="0.5" y="0.5" width="10" height="10" rx="1.3" fill="url(#eg)" stroke="#8f8f8f"/><path d="M2 5.5H9" stroke="#3b4f9b" stroke-width="1.1"/><path d="M5.5 2V9" stroke="#3b4f9b" stroke-width="1.1"/></svg>
<svg class="a" style="left:72px;top:529px" width="14" height="16" viewBox="0 0 14 16"><path d="M1 3.6V11.6A6 3 0 0 0 13 11.6V3.6Z" fill="#424242"/><ellipse cx="7" cy="3.6" rx="6" ry="3" fill="#424242"/><ellipse cx="7" cy="3.7" rx="4.9" ry="2" fill="#f3f3f3"/></svg>
<div class="t" style="left:91.3px;top:522.96px;font-size:26.67px;color:#000;letter-spacing:0.281px;">HumanResource</div>
<svg class="a" style="left:55px;top:567px" width="11" height="11" viewBox="0 0 11 11"><defs><linearGradient id="eg" x1="0" y1="0" x2="0" y2="1"><stop offset="0" stop-color="#fff"/><stop offset="0.55" stop-color="#f4f4f4"/><stop offset="1" stop-color="#d6d6d6"/></linearGradient></defs><rect x="0.5" y="0.5" width="10" height="10" rx="1.3" fill="url(#eg)" stroke="#8f8f8f"/><path d="M2 5.5H9" stroke="#3b4f9b" stroke-width="1.1"/><path d="M5.5 2V9" stroke="#3b4f9b" stroke-width="1.1"/></svg>
<svg class="a" style="left:72px;top:563px" width="14" height="16" viewBox="0 0 14 16"><path d="M1 3.6V11.6A6 3 0 0 0 13 11.6V3.6Z" fill="#424242"/><ellipse cx="7" cy="3.6" rx="6" ry="3" fill="#424242"/><ellipse cx="7" cy="3.7" rx="4.9" ry="2" fill="#f3f3f3"/></svg>
<div class="t" style="left:91.3px;top:556.96px;font-size:26.67px;color:#000;letter-spacing:0.156px;">QLBanHang</div>
<svg class="a" style="left:55px;top:601px" width="11" height="11" viewBox="0 0 11 11"><defs><linearGradient id="eg" x1="0" y1="0" x2="0" y2="1"><stop offset="0" stop-color="#fff"/><stop offset="0.55" stop-color="#f4f4f4"/><stop offset="1" stop-color="#d6d6d6"/></linearGradient></defs><rect x="0.5" y="0.5" width="10" height="10" rx="1.3" fill="url(#eg)" stroke="#8f8f8f"/><path d="M2 5.5H9" stroke="#3b4f9b" stroke-width="1.1"/><path d="M5.5 2V9" stroke="#3b4f9b" stroke-width="1.1"/></svg>
<svg class="a" style="left:72px;top:597px" width="14" height="16" viewBox="0 0 14 16"><path d="M1 3.6V11.6A6 3 0 0 0 13 11.6V3.6Z" fill="#424242"/><ellipse cx="7" cy="3.6" rx="6" ry="3" fill="#424242"/><ellipse cx="7" cy="3.7" rx="4.9" ry="2" fill="#f3f3f3"/></svg>
<div class="t" style="left:91.3px;top:590.96px;font-size:26.67px;color:#000;letter-spacing:0.357px;">QLSinhVien</div>
<svg class="a" style="left:36px;top:635px" width="11" height="11" viewBox="0 0 11 11"><defs><linearGradient id="eg" x1="0" y1="0" x2="0" y2="1"><stop offset="0" stop-color="#fff"/><stop offset="0.55" stop-color="#f4f4f4"/><stop offset="1" stop-color="#d6d6d6"/></linearGradient></defs><rect x="0.5" y="0.5" width="10" height="10" rx="1.3" fill="url(#eg)" stroke="#8f8f8f"/><path d="M2 5.5H9" stroke="#3b4f9b" stroke-width="1.1"/><path d="M5.5 2V9" stroke="#3b4f9b" stroke-width="1.1"/></svg>
<svg class="a" style="left:52px;top:630px" width="16" height="14" viewBox="0 0 16 14"><path d="M1.5 4.2L6 4.2L7.6 2L14.5 2V13H1.5Z" fill="#dcb67a"/><path d="M8 3.1H13.7" stroke="#f1dcb5" stroke-width="1"/></svg>
<div class="t" style="left:72.7px;top:624.96px;font-size:26.67px;color:#000;letter-spacing:0.113px;">Security</div>
<svg class="a" style="left:36px;top:669px" width="11" height="11" viewBox="0 0 11 11"><defs><linearGradient id="eg" x1="0" y1="0" x2="0" y2="1"><stop offset="0" stop-color="#fff"/><stop offset="0.55" stop-color="#f4f4f4"/><stop offset="1" stop-color="#d6d6d6"/></linearGradient></defs><rect x="0.5" y="0.5" width="10" height="10" rx="1.3" fill="url(#eg)" stroke="#8f8f8f"/><path d="M2 5.5H9" stroke="#3b4f9b" stroke-width="1.1"/><path d="M5.5 2V9" stroke="#3b4f9b" stroke-width="1.1"/></svg>
<svg class="a" style="left:52px;top:664px" width="16" height="14" viewBox="0 0 16 14"><path d="M1.5 4.2L6 4.2L7.6 2L14.5 2V13H1.5Z" fill="#dcb67a"/><path d="M8 3.1H13.7" stroke="#f1dcb5" stroke-width="1"/></svg>
<div class="t" style="left:72.7px;top:658.96px;font-size:26.67px;color:#000;letter-spacing:0.106px;">Server Objects</div>
<svg class="a" style="left:36px;top:703px" width="11" height="11" viewBox="0 0 11 11"><defs><linearGradient id="eg" x1="0" y1="0" x2="0" y2="1"><stop offset="0" stop-color="#fff"/><stop offset="0.55" stop-color="#f4f4f4"/><stop offset="1" stop-color="#d6d6d6"/></linearGradient></defs><rect x="0.5" y="0.5" width="10" height="10" rx="1.3" fill="url(#eg)" stroke="#8f8f8f"/><path d="M2 5.5H9" stroke="#3b4f9b" stroke-width="1.1"/><path d="M5.5 2V9" stroke="#3b4f9b" stroke-width="1.1"/></svg>
<svg class="a" style="left:52px;top:698px" width="16" height="14" viewBox="0 0 16 14"><path d="M1.5 4.2L6 4.2L7.6 2L14.5 2V13H1.5Z" fill="#dcb67a"/><path d="M8 3.1H13.7" stroke="#f1dcb5" stroke-width="1"/></svg>
<div class="t" style="left:72.7px;top:692.96px;font-size:26.67px;color:#000;letter-spacing:0.335px;">Replication</div>
<svg class="a" style="left:36px;top:737px" width="11" height="11" viewBox="0 0 11 11"><defs><linearGradient id="eg" x1="0" y1="0" x2="0" y2="1"><stop offset="0" stop-color="#fff"/><stop offset="0.55" stop-color="#f4f4f4"/><stop offset="1" stop-color="#d6d6d6"/></linearGradient></defs><rect x="0.5" y="0.5" width="10" height="10" rx="1.3" fill="url(#eg)" stroke="#8f8f8f"/><path d="M2 5.5H9" stroke="#3b4f9b" stroke-width="1.1"/><path d="M5.5 2V9" stroke="#3b4f9b" stroke-width="1.1"/></svg>
<svg class="a" style="left:52px;top:732px" width="16" height="14" viewBox="0 0 16 14"><path d="M1.5 4.2L6 4.2L7.6 2L14.5 2V13H1.5Z" fill="#dcb67a"/><path d="M8 3.1H13.7" stroke="#f1dcb5" stroke-width="1"/></svg>
<div class="t" style="left:72.7px;top:726.96px;font-size:26.67px;color:#000;letter-spacing:0.303px;">PolyBase</div>
<svg class="a" style="left:36px;top:771px" width="11" height="11" viewBox="0 0 11 11"><defs><linearGradient id="eg" x1="0" y1="0" x2="0" y2="1"><stop offset="0" stop-color="#fff"/><stop offset="0.55" stop-color="#f4f4f4"/><stop offset="1" stop-color="#d6d6d6"/></linearGradient></defs><rect x="0.5" y="0.5" width="10" height="10" rx="1.3" fill="url(#eg)" stroke="#8f8f8f"/><path d="M2 5.5H9" stroke="#3b4f9b" stroke-width="1.1"/><path d="M5.5 2V9" stroke="#3b4f9b" stroke-width="1.1"/></svg>
<svg class="a" style="left:52px;top:766px" width="16" height="14" viewBox="0 0 16 14"><path d="M1.5 4.2L6 4.2L7.6 2L14.5 2V13H1.5Z" fill="#dcb67a"/><path d="M8 3.1H13.7" stroke="#f1dcb5" stroke-width="1"/></svg>
<div class="t" style="left:72.7px;top:760.96px;font-size:26.67px;color:#000;letter-spacing:0.079px;">Always On High Availability</div>
<svg class="a" style="left:36px;top:805px" width="11" height="11" viewBox="0 0 11 11"><defs><linearGradient id="eg" x1="0" y1="0" x2="0" y2="1"><stop offset="0" stop-color="#fff"/><stop offset="0.55" stop-color="#f4f4f4"/><stop offset="1" stop-color="#d6d6d6"/></linearGradient></defs><rect x="0.5" y="0.5" width="10" height="10" rx="1.3" fill="url(#eg)" stroke="#8f8f8f"/><path d="M2 5.5H9" stroke="#3b4f9b" stroke-width="1.1"/><path d="M5.5 2V9" stroke="#3b4f9b" stroke-width="1.1"/></svg>
<svg class="a" style="left:52px;top:800px" width="16" height="14" viewBox="0 0 16 14"><path d="M1.5 4.2L6 4.2L7.6 2L14.5 2V13H1.5Z" fill="#dcb67a"/><path d="M8 3.1H13.7" stroke="#f1dcb5" stroke-width="1"/></svg>
<div class="t" style="left:72.7px;top:794.96px;font-size:26.67px;color:#000;letter-spacing:0.15px;">Management</div>
<svg class="a" style="left:36px;top:839px" width="11" height="11" viewBox="0 0 11 11"><defs><linearGradient id="eg" x1="0" y1="0" x2="0" y2="1"><stop offset="0" stop-color="#fff"/><stop offset="0.55" stop-color="#f4f4f4"/><stop offset="1" stop-color="#d6d6d6"/></linearGradient></defs><rect x="0.5" y="0.5" width="10" height="10" rx="1.3" fill="url(#eg)" stroke="#8f8f8f"/><path d="M2 5.5H9" stroke="#3b4f9b" stroke-width="1.1"/><path d="M5.5 2V9" stroke="#3b4f9b" stroke-width="1.1"/></svg>
<svg class="a" style="left:52px;top:834px" width="16" height="14" viewBox="0 0 16 14"><path d="M1.5 4.2L6 4.2L7.6 2L14.5 2V13H1.5Z" fill="#dcb67a"/><path d="M8 3.1H13.7" stroke="#f1dcb5" stroke-width="1"/></svg>
<div class="t" style="left:72.7px;top:828.96px;font-size:26.67px;color:#000;letter-spacing:0.061px;">Integration Services Catalogs</div>
<svg class="a" style="left:36px;top:873px" width="11" height="11" viewBox="0 0 11 11"><defs><linearGradient id="eg" x1="0" y1="0" x2="0" y2="1"><stop offset="0" stop-color="#fff"/><stop offset="0.55" stop-color="#f4f4f4"/><stop offset="1" stop-color="#d6d6d6"/></linearGradient></defs><rect x="0.5" y="0.5" width="10" height="10" rx="1.3" fill="url(#eg)" stroke="#8f8f8f"/><path d="M2 5.5H9" stroke="#3b4f9b" stroke-width="1.1"/><path d="M5.5 2V9" stroke="#3b4f9b" stroke-width="1.1"/></svg>
<svg class="a" style="left:53px;top:869.4px" width="15" height="16" viewBox="0 0 15 16"><rect x="5" y="0.5" width="8" height="7" fill="#424242"/><path d="M6.6 2.6H11.4M6.6 4.8H11.4" stroke="#fff" stroke-width="1"/><path d="M1 8.5H6.5V9.6L4.6 11.5L6.5 13.4V14.5H1V13.4L2.9 11.5L1 9.6Z" fill="#424242"/><circle cx="10.5" cy="11.2" r="3.9" fill="#fff"/><circle cx="10.5" cy="11.2" r="3.4" fill="#329932"/><path d="M9.4 9.4L12.4 11.2L9.4 13Z" fill="#fff"/></svg>
<div class="t" style="left:72.7px;top:862.96px;font-size:26.67px;color:#000;letter-spacing:0.127px;">SQL Server Agent</div>
<svg class="a" style="left:36px;top:907px" width="11" height="11" viewBox="0 0 11 11"><defs><linearGradient id="eg" x1="0" y1="0" x2="0" y2="1"><stop offset="0" stop-color="#fff"/><stop offset="0.55" stop-color="#f4f4f4"/><stop offset="1" stop-color="#d6d6d6"/></linearGradient></defs><rect x="0.5" y="0.5" width="10" height="10" rx="1.3" fill="url(#eg)" stroke="#8f8f8f"/><path d="M2 5.5H9" stroke="#3b4f9b" stroke-width="1.1"/><path d="M5.5 2V9" stroke="#3b4f9b" stroke-width="1.1"/></svg>
<svg class="a" style="left:53px;top:902.4px" width="15" height="16" viewBox="0 0 15 16"><rect x="2.5" y="2" width="10" height="12" fill="#f0f0f0" stroke="#424242" stroke-width="1.2"/><path d="M1 4H3M1 6.3H3M1 8.6H3M1 10.9H3M1 13H3" stroke="#424242" stroke-width="1"/><path d="M9.2 4.2L6 8.2H8.3L6.8 11.4" fill="none" stroke="#424242" stroke-width="1.1"/></svg>
<div class="t" style="left:72.7px;top:896.96px;font-size:26.67px;color:#000;letter-spacing:0.11px;">XEvent Profiler</div>
<div class="a" style="left:494px;top:164px;width:366px;height:39px;background:#fff29d;"></div>
<div class="a" style="left:494px;top:201px;width:1419px;height:2px;background:#fff29d;"></div>
<div class="t" style="left:498.57px;top:168.96px;font-size:26.67px;color:#000;letter-spacing:0.198px;">SQLQuery1…SA (130))*</div>
<svg class="a" style="left:798px;top:177px" width="13" height="11" viewBox="0 0 13 11"><path d="M0.6 5.4H4.4" stroke="#75633d" stroke-width="1.2"/><path d="M4.9 0.8V10" stroke="#75633d" stroke-width="1.3"/><path d="M5 2.3H10.6V7.3H5" fill="none" stroke="#75633d" stroke-width="1.2"/><path d="M5 6.6H10.6" stroke="#75633d" stroke-width="2.2"/></svg>
<svg class="a" style="left:833px;top:177px" width="14" height="12" viewBox="0 0 14 12"><path d="M1.4 1.2L12.2 10.6M12.2 1.2L1.4 10.6" stroke="#75633d" stroke-width="1.5" fill="none"/></svg>
<svg class="a" style="left:1898px;top:188px" width="12" height="6" viewBox="0 0 12 6"><path d="M0.6 0H11L5.8 5.4Z" fill="#ced4e4"/></svg>
<div class="a" style="left:494px;top:203px;width:1419px;height:778px;background:#f0f0f0;"></div>
<div class="a" style="left:494px;top:203px;width:1419px;height:1px;background:#c9cedb;"></div>
<div class="a" style="left:494px;top:204px;width:1px;height:776px;background:#8e9bbc;"></div>
<div class="a" style="left:1912px;top:204px;width:1px;height:776px;background:#8e9bbc;"></div>
<div class="a" style="left:495px;top:204px;width:1393px;height:210px;background:#ffffff;"></div>
<div class="a" style="left:495px;top:204px;width:21px;height:210px;background:#e6e7e8;"></div>
<div class="a" style="left:519px;top:204px;width:7px;height:123px;background:#ffee62;"></div>
<div class="a" style="left:540px;top:285px;width:1346px;height:41px;background:#ffffff;border:2px solid #eaeaf2;"></div>
<div class="a" style="left:529px;top:218px;width:11px;height:11px;background:#ffffff;border:1px solid #a5a5a5;"></div>
<div class="a" style="left:531px;top:223px;width:7px;height:1px;background:#555555;"></div>
<div class="a" style="left:535px;top:231px;width:1px;height:95px;background:#a5a5a5;"></div>
<div class="a" style="left:535px;top:325px;width:6px;height:1px;background:#a5a5a5;"></div>
<div class="t" style="left:541.55px;top:206.26px;font-size:34.67px;color:#0000ff;letter-spacing:-0.118px;">SELECT</div>
<div class="t" style="left:676.59px;top:206.26px;font-size:34.67px;color:#ff00ff;letter-spacing:-0.052px;">ISNULL</div>
<div class="t" style="left:541.55px;top:247.26px;font-size:34.67px;color:#0000ff;letter-spacing:-0.118px;">SELECT</div>
<div class="t" style="left:676.59px;top:247.26px;font-size:34.67px;color:#ff00ff;letter-spacing:-0.052px;">ISNULL</div>
<div class="t" style="left:541.55px;top:288.26px;font-size:34.67px;color:#0000ff;letter-spacing:-0.118px;">SELECT</div>
<div class="t" style="left:676.59px;top:288.26px;font-size:34.67px;color:#ff00ff;letter-spacing:-0.052px;">ISNULL</div>
<div class="t" style="left:797.74px;top:206.26px;font-size:34.67px;color:#808080;letter-spacing:-0.293px;">(NULL,</div>
<div class="t" style="left:917.91px;top:206.26px;font-size:34.67px;color:#000;letter-spacing:0px;">0</div>
<div class="t" style="left:936.16px;top:206.26px;font-size:34.67px;color:#808080;letter-spacing:0px;">)</div>
<div class="t" style="left:797.74px;top:247.26px;font-size:34.67px;color:#808080;letter-spacing:-0.293px;">(NULL,</div>
<div class="t" style="left:918.41px;top:247.26px;font-size:34.67px;color:#ff00ff;letter-spacing:-0.449px;">GETDATE</div>
<div class="t" style="left:1070.24px;top:247.26px;font-size:34.67px;color:#808080;letter-spacing:-0.425px;">())</div>
<div class="t" style="left:797.74px;top:288.26px;font-size:34.67px;color:#808080;letter-spacing:0px;">(</div>
<div class="t" style="left:809.41px;top:288.26px;font-size:34.67px;color:#ff0000;letter-spacing:-0.455px;">'sql.edu.vn'</div>
<div class="t" style="left:958.61px;top:288.26px;font-size:34.67px;color:#808080;letter-spacing:0px;">,</div>
<div class="t" style="left:972.81px;top:288.26px;font-size:34.67px;color:#ff0000;letter-spacing:-0.45px;">'sql'</div>
<div class="t" style="left:1024.76px;top:288.26px;font-size:34.67px;color:#808080;letter-spacing:0px;">)</div>
<div class="a" style="left:1034.4px;top:285.5px;width:1.7px;height:39.5px;background:#000;"></div>
<div class="a" style="left:1888px;top:204px;width:24px;height:210px;background:#e8e8ec;"></div>
<div class="a" style="left:1888px;top:204px;width:24px;height:20px;background:#e6ecfa;border:1px solid #a9b3c9;"></div>
<svg class="a" style="left:1892px;top:206px" width="16" height="16" viewBox="0 0 16 16"><path d="M1 6.8H15M1 9.4H15" stroke="#2d3b55" stroke-width="1.2"/><path d="M8 1.2V6.4M8 9.8V15" stroke="#2d3b55" stroke-width="1.2"/><path d="M5.6 3.8L8 0.8L10.4 3.8ZM5.6 12.4L8 15.4L10.4 12.4Z" fill="#2d3b55"/></svg>
<svg class="a" style="left:1895px;top:232px" width="12" height="7" viewBox="0 0 12 7"><path d="M0 6.4L5.6 0L11.2 6.4Z" fill="#868999"/></svg>
<svg class="a" style="left:1895px;top:400px" width="12" height="7" viewBox="0 0 12 7"><path d="M0 0L5.6 6.4L11.2 0Z" fill="#868999"/></svg>
<div class="a" style="left:1895px;top:245px;width:12px;height:104px;background:#c2c3c9;"></div>
<div class="a" style="left:1890px;top:245px;width:5px;height:54px;background:#ffee62;"></div>
<div class="a" style="left:1888px;top:286px;width:24px;height:2px;background:#0000cd;"></div>
<div class="a" style="left:495px;top:414px;width:1393px;height:21px;background:#e8e8ec;"></div>
<div class="a" style="left:1888px;top:414px;width:24px;height:21px;background:#e8e8ec;"></div>
<div class="a" style="left:495px;top:414px;width:75px;height:21px;background:#fcfcfc;border:1px solid #b9c4de;"></div>
<div class="t sans" style="left:497.9px;top:418.96px;font-size:13.4px;color:#000;letter-spacing:0.896px;">100 %</div>
<svg class="a" style="left:559px;top:423.3px" width="7" height="4" viewBox="0 0 7 4"><path d="M0 0H7L3.5 4Z" fill="#1b2a47"/></svg>
<svg class="a" style="left:577px;top:419px" width="8" height="12" viewBox="0 0 8 12"><path d="M7.5 0.5V11.5L0.5 6Z" fill="#c6c8d6"/></svg>
<svg class="a" style="left:1873px;top:419px" width="8" height="12" viewBox="0 0 8 12"><path d="M0.5 0.5V11.5L7.5 6Z" fill="#c6c8d6"/></svg>
<div class="a" style="left:495px;top:439px;width:83px;height:25px;background:#ffffff;border:1px solid #dcdcdc;border-bottom:none;"></div>
<div class="a" style="left:577px;top:441px;width:95px;height:22px;background:#f0f0f0;border:1px solid #d9d9d9;"></div>
<div class="t sans" style="left:524.33px;top:443.96px;font-size:13.4px;color:#000;letter-spacing:0.192px;">Results</div>
<div class="t sans" style="left:602.93px;top:445.96px;font-size:13.4px;color:#000;letter-spacing:0.577px;">Messages</div>
<svg class="a" style="left:505px;top:444px" width="13" height="12" viewBox="0 0 13 12"><rect x="0" y="0" width="13" height="12" fill="#424242"/><g fill="#fff"><rect x="1.2" y="2.6" width="3" height="2.2"/><rect x="5.1" y="2.6" width="3" height="2.2"/><rect x="9" y="2.6" width="2.8" height="2.2"/><rect x="1.2" y="5.8" width="3" height="2.2"/><rect x="5.1" y="5.8" width="3" height="2.2"/><rect x="9" y="5.8" width="2.8" height="2.2"/><rect x="1.2" y="9" width="3" height="2"/><rect x="5.1" y="9" width="3" height="2"/><rect x="9" y="9" width="2.8" height="2"/></g></svg>
<svg class="a" style="left:582px;top:444px" width="16" height="16" viewBox="0 0 16 16"><rect x="8.4" y="1" width="6" height="10.4" fill="#424242"/><path d="M9.6 2.8H13.2M9.6 4.8H13.2" stroke="#e8e8e8" stroke-width="0.9"/><rect x="12" y="8.6" width="1.2" height="1.2" fill="#f0f0f0"/><path d="M1.2 5.6H6L8 7.6V14.6H1.2Z" fill="#f0f0f0" stroke="#424242" stroke-width="1.1"/><path d="M2.8 8.6H5.4M2.8 10.6H6.4M2.8 12.6H6.4" stroke="#424242" stroke-width="0.9"/></svg>
<div class="a" style="left:499px;top:464px;width:1409px;height:159px;background:#ffffff;border:1px solid #a0a3ab;"></div>
<div class="a" style="left:500px;top:465px;width:91px;height:45px;background:#ffffff;border-right:1px solid #e3e3e3;border-bottom:1px solid #e3e3e3;"></div>
<div class="a" style="left:591px;top:465px;width:281px;height:45px;background:#ffffff;border-right:1px solid #e3e3e3;border-bottom:1px solid #e3e3e3;"></div>
<div class="t" style="left:599.6px;top:469.99px;font-size:33.8px;">(No column name)</div>
<div class="a" style="left:500px;top:510px;width:91px;height:45px;background:#ffffff;border-right:1px solid #e3e3e3;border-bottom:1px solid #e3e3e3;"></div>
<div class="t" style="left:510.5px;top:514.99px;font-size:33.8px;">1</div>
<div class="a" style="left:591px;top:509px;width:281px;height:46px;background:#e8ecf1;border:1px dotted #000;"></div>
<div class="t" style="left:601.5px;top:514.99px;font-size:33.8px;">0</div>
<div class="a" style="left:499px;top:626px;width:1409px;height:159px;background:#ffffff;border:1px solid #a0a3ab;"></div>
<div class="a" style="left:500px;top:627px;width:91px;height:45px;background:#ffffff;border-right:1px solid #e3e3e3;border-bottom:1px solid #e3e3e3;"></div>
<div class="a" style="left:591px;top:627px;width:373px;height:45px;background:#ffffff;border-right:1px solid #e3e3e3;border-bottom:1px solid #e3e3e3;"></div>
<div class="t" style="left:599.6px;top:631.99px;font-size:33.8px;">(No column name)</div>
<div class="a" style="left:500px;top:672px;width:91px;height:45px;background:#ffffff;border-right:1px solid #e3e3e3;border-bottom:1px solid #e3e3e3;"></div>
<div class="t" style="left:510.5px;top:676.99px;font-size:33.8px;">1</div>
<div class="a" style="left:591px;top:671px;width:373px;height:46px;background:#e8ecf1;border:1px dotted #000;"></div>
<div class="t" style="left:601.5px;top:676.99px;font-size:33.8px;">2020-03-08 15:11:26.143</div>
<div class="a" style="left:499px;top:788px;width:1409px;height:159px;background:#ffffff;border:1px solid #a0a3ab;"></div>
<div class="a" style="left:500px;top:789px;width:91px;height:45px;background:#ffffff;border-right:1px solid #e3e3e3;border-bottom:1px solid #e3e3e3;"></div>
<div class="a" style="left:591px;top:789px;width:281px;height:45px;background:#ffffff;border-right:1px solid #e3e3e3;border-bottom:1px solid #e3e3e3;"></div>
<div class="t" style="left:599.6px;top:793.99px;font-size:33.8px;">(No column name)</div>
<div class="a" style="left:500px;top:834px;width:91px;height:45px;background:#ffffff;border-right:1px solid #e3e3e3;border-bottom:1px solid #e3e3e3;"></div>
<div class="t" style="left:510.5px;top:838.99px;font-size:33.8px;">1</div>
<div class="a" style="left:591px;top:833px;width:281px;height:46px;background:#e8ecf1;border:1px dotted #000;"></div>
<div class="t" style="left:601.5px;top:838.99px;font-size:33.8px;">sql.edu.vn</div>
<div class="a" style="left:495px;top:951px;width:1417px;height:1px;background:#ffffff;"></div>
<div class="a" style="left:495px;top:952px;width:1417px;height:4px;background:#e9e9ed;"></div>
<div class="a" style="left:495px;top:956px;width:1417px;height:24px;background:#f0e68c;"></div>
<svg class="a" style="left:498px;top:960px" width="16" height="16" viewBox="0 0 16 16"><circle cx="8" cy="8" r="7.6" fill="#f6f2c8"/><circle cx="8" cy="8" r="6.9" fill="#339933"/><path d="M4.4 8.2L7 10.9L11.4 5" fill="none" stroke="#fff" stroke-width="1.9"/></svg>
<div class="t sans" style="left:517.64px;top:960.94px;font-size:14.6px;color:#000;letter-spacing:0.107px;">Query executed successfully.</div>
<div class="a" style="left:1404px;top:960px;width:1px;height:16px;background:#fdfbe8;"></div>
<div class="a" style="left:1405px;top:960px;width:1px;height:16px;background:#ddd58a;"></div>
<div class="a" style="left:1575px;top:960px;width:1px;height:16px;background:#fdfbe8;"></div>
<div class="a" style="left:1576px;top:960px;width:1px;height:16px;background:#ddd58a;"></div>
<div class="a" style="left:1646px;top:960px;width:1px;height:16px;background:#fdfbe8;"></div>
<div class="a" style="left:1647px;top:960px;width:1px;height:16px;background:#ddd58a;"></div>
<div class="a" style="left:1770px;top:960px;width:1px;height:16px;background:#fdfbe8;"></div>
<div class="a" style="left:1771px;top:960px;width:1px;height:16px;background:#ddd58a;"></div>
<div class="a" style="left:1839px;top:960px;width:1px;height:16px;background:#fdfbe8;"></div>
<div class="a" style="left:1840px;top:960px;width:1px;height:16px;background:#ddd58a;"></div>
<div class="t sans" style="left:1410.42px;top:960.94px;font-size:14.6px;color:#000;letter-spacing:-0.07px;">(local)\SQL1 (15.0 RTM)</div>
<div class="t sans" style="left:1581.34px;top:960.94px;font-size:14.6px;color:#000;letter-spacing:0.048px;">SA (130)</div>
<div class="t sans" style="left:1652.13px;top:960.94px;font-size:14.6px;color:#000;letter-spacing:-0.037px;">HumanResource</div>
<div class="t sans" style="left:1775.92px;top:960.94px;font-size:14.6px;color:#000;letter-spacing:-0.314px;">00:00:00</div>
<div class="t sans" style="left:1844.72px;top:960.94px;font-size:14.6px;color:#000;letter-spacing:0.16px;">3 rows</div>
<div class="a" style="left:0px;top:988px;width:1920px;height:42px;background:#007acc;"></div>
<svg class="a" style="left:4px;top:1001px" width="22" height="16" viewBox="0 0 22 16"><path d="M5.2 2.7H20L17.8 13.9H2Z" fill="none" stroke="#f2f7fc" stroke-width="1.3"/></svg>
<div class="t" style="left:34.4px;top:994.96px;font-size:26.67px;color:#ffffff;letter-spacing:0.398px;">Ready</div>
<div class="t" style="left:966.7px;top:994.96px;font-size:26.67px;color:#ffffff;letter-spacing:0.42px;">Ln 3</div>
<div class="t" style="left:1080.43px;top:994.96px;font-size:26.67px;color:#ffffff;letter-spacing:0.698px;">Col 56</div>
<div class="t" style="left:1194.13px;top:994.96px;font-size:26.67px;color:#ffffff;letter-spacing:0.881px;">Ch 35</div>
<div class="t" style="left:1364.07px;top:994.96px;font-size:26.67px;color:#ffffff;letter-spacing:0.547px;">INS</div>
<div class="a" style="left:0px;top:1030px;width:1920px;height:9px;background:linear-gradient(90deg,#22363e 0%,#2a3c44 35%,#2c3d48 60%,#283849 80%,#1f2b47 100%);"></div>
<div class="a" style="left:1914px;top:1030px;width:1px;height:9px;background:#8f97a6;"></div>
<div class="a" style="left:620px;top:1030px;width:61px;height:9px;background:#5d6a70;"></div>
<div class="a" style="left:1784px;top:1037px;width:3px;height:2px;background:#c9ced1;"></div>
<div class="a" style="left:1790px;top:1037px;width:3px;height:2px;background:#c9ced1;"></div>
<div class="a" style="left:1796px;top:1037px;width:3px;height:2px;background:#c9ced1;"></div>
<div class="a" style="left:1808px;top:1037px;width:3px;height:2px;background:#c9ced1;"></div>
<div class="a" style="left:1815px;top:1037px;width:3px;height:2px;background:#c9ced1;"></div>
<div class="a" style="left:1822px;top:1037px;width:3px;height:2px;background:#c9ced1;"></div>
<div class="a" style="left:1829px;top:1037px;width:3px;height:2px;background:#c9ced1;"></div>
</body>
</html>
